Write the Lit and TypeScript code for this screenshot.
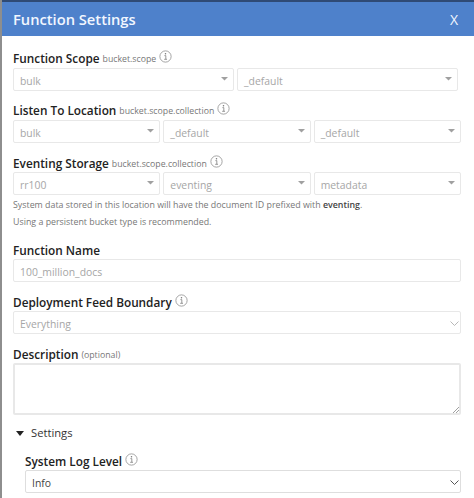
import { LitElement, html, css, svg } from "lit";
import { customElement } from "lit/decorators.js";

const info = html`<svg class="info" viewBox="0 0 12 12" aria-hidden="true"><circle cx="6" cy="6" r="5.2" fill="none" stroke="#8a8a8a" stroke-width=".7"/><circle cx="6" cy="3.5" r=".7" fill="#777"/><path d="M5 5.2h1.3v3.2M4.8 8.6h2.6" fill="none" stroke="#777" stroke-width=".7"/></svg>`;

const caret = svg`<path d="M0 0h7L3.5 3.6z" fill="#a0a0a0"/>`;

@customElement("app-root")
export class AppRoot extends LitElement {
  static styles = css`
    :host { display: block; width: 474px; height: 498px; overflow: hidden; background: #fff; font-family: "Open Sans", sans-serif; color: #222; }
    .shell { height: 498px; box-sizing: border-box; border-left: 2px solid #8e8e8e; display: flex; flex-direction: column; overflow: hidden; }
    .top { height: 2px; background: #2f4a75; margin-left: -2px; flex: none; }
    .head { height: 34px; flex: none; background: #4e81cb; color: #f2f7ff; display: flex; align-items: center; justify-content: space-between; padding: 0 16px 0 11px; font-size: 14.7px; font-weight: 600; }
    .head .x { font-size: 14px; font-weight: 400; }
    .body { padding: 14px 13px 0 11px; display: flex; flex-direction: column; }
    .label { font-size: 11.8px; font-weight: 600; line-height: 16px; height: 16px; color: #222; display: flex; align-items: center; gap: 3px; white-space: nowrap; }
    .sub { font-size: 8.75px; font-weight: 400; line-height: 14px; color: #777; padding-top: 1px; }
    .info { width: 13px; height: 13px; flex: none; margin-bottom: 3px; }
    .row { display: flex; gap: 3px; margin-top: 1px; }
    .row.short { margin-right: 3px; }
    .row.loose { margin-top: 2px; }
    .sel, .input { height: 23px; box-sizing: border-box; border: 1px solid #e8e8e8; border-radius: 2px; background: #fff; font-size: 10.4px; color: #a6a6a6; padding: 2px 6px 0; display: flex; align-items: center; justify-content: space-between; flex: 1 1 0; min-width: 0; }
    .caret { width: 7px; height: 4px; flex: none; margin: 0 -1px 4px 0; }
    .chev { width: 9px; height: 5px; flex: none; fill: none; stroke: #b8b8b8; stroke-width: 1; margin-right: -5px; }
    .group { margin-bottom: 12px; }
    .scope { margin-bottom: 11px; }
    .storage { margin-bottom: 11px; }
    .note { font-size: 8.85px; line-height: 17px; color: #777; white-space: nowrap; }
    .note.first { margin-top: 2px; }
    .note b { font-weight: 600; color: #444; }
    .area { height: 52px; margin-top: 1px; box-sizing: border-box; border: 2px solid #e8e8e8; border-radius: 2px; position: relative; }
    .grip { position: absolute; right: 0; bottom: 0; width: 7px; height: 7px; stroke: #888; stroke-width: .8; fill: none; }
    .settings { display: flex; align-items: center; gap: 7px; font-size: 11.2px; color: #333; margin: 9px 0 0 3px; line-height: 18px; }
    .tri { width: 8px; height: 5px; flex: none; fill: #222; }
    .nested { margin: 11px 0 0 12px; }
    .dark { color: #444; border-color: #dedede; }
    .dark .chev { stroke: #555; }
  `;

  private sel(text: string) {
    return html`<div class="sel"><span>${text}</span><svg class="caret" viewBox="0 0 7 4">${caret}</svg></div>`;
  }

  private chevSel(text: string, cls = "") {
    return html`<div class="sel ${cls}"><span>${text}</span><svg class="chev" viewBox="0 0 9 5"><path d="M.5.5 4.5 4.5 8.5.5"/></svg></div>`;
  }

  render() {
    return html`<div class="shell">
      <div class="top"></div>
      <div class="head"><span>Function Settings</span><span class="x">X</span></div>
      <div class="body">
        <div class="group scope">
          <div class="label">Function Scope <span class="sub">bucket.scope</span>${info}</div>
          <div class="row short loose">${this.sel("bulk")}${this.sel("_default")}</div>
        </div>
        <div class="group">
          <div class="label">Listen To Location <span class="sub">bucket.scope.collection</span>${info}</div>
          <div class="row loose">${this.sel("bulk")}${this.sel("_default")}${this.sel("_default")}</div>
        </div>
        <div class="group storage">
          <div class="label">Eventing Storage <span class="sub">bucket.scope.collection</span>${info}</div>
          <div class="row">${this.sel("rr100")}${this.sel("eventing")}${this.sel("metadata")}</div>
          <div class="note first">System data stored in this location will have the document ID prefixed with <b>eventing</b>.</div>
          <div class="note">Using a persistent bucket type is recommended.</div>
        </div>
        <div class="group">
          <div class="label">Function Name</div>
          <div class="row"><div class="input">100_million_docs</div></div>
        </div>
        <div class="group">
          <div class="label">Deployment Feed Boundary ${info}</div>
          <div class="row">${this.chevSel("Everything")}</div>
        </div>
        <div>
          <div class="label">Description <span class="sub">(optional)</span></div>
          <div class="area"><svg class="grip" viewBox="0 0 7 7"><path d="M1 7 7 1M4 7 7 4"/></svg></div>
        </div>
        <div class="settings"><svg class="tri" viewBox="0 0 8 5"><path d="M0 0h8L4 5z"/></svg><span>Settings</span></div>
        <div class="nested">
          <div class="label">System Log Level ${info}</div>
          <div class="row">${this.chevSel("Info", "dark")}</div>
        </div>
      </div>
    </div>`;
  }
}
